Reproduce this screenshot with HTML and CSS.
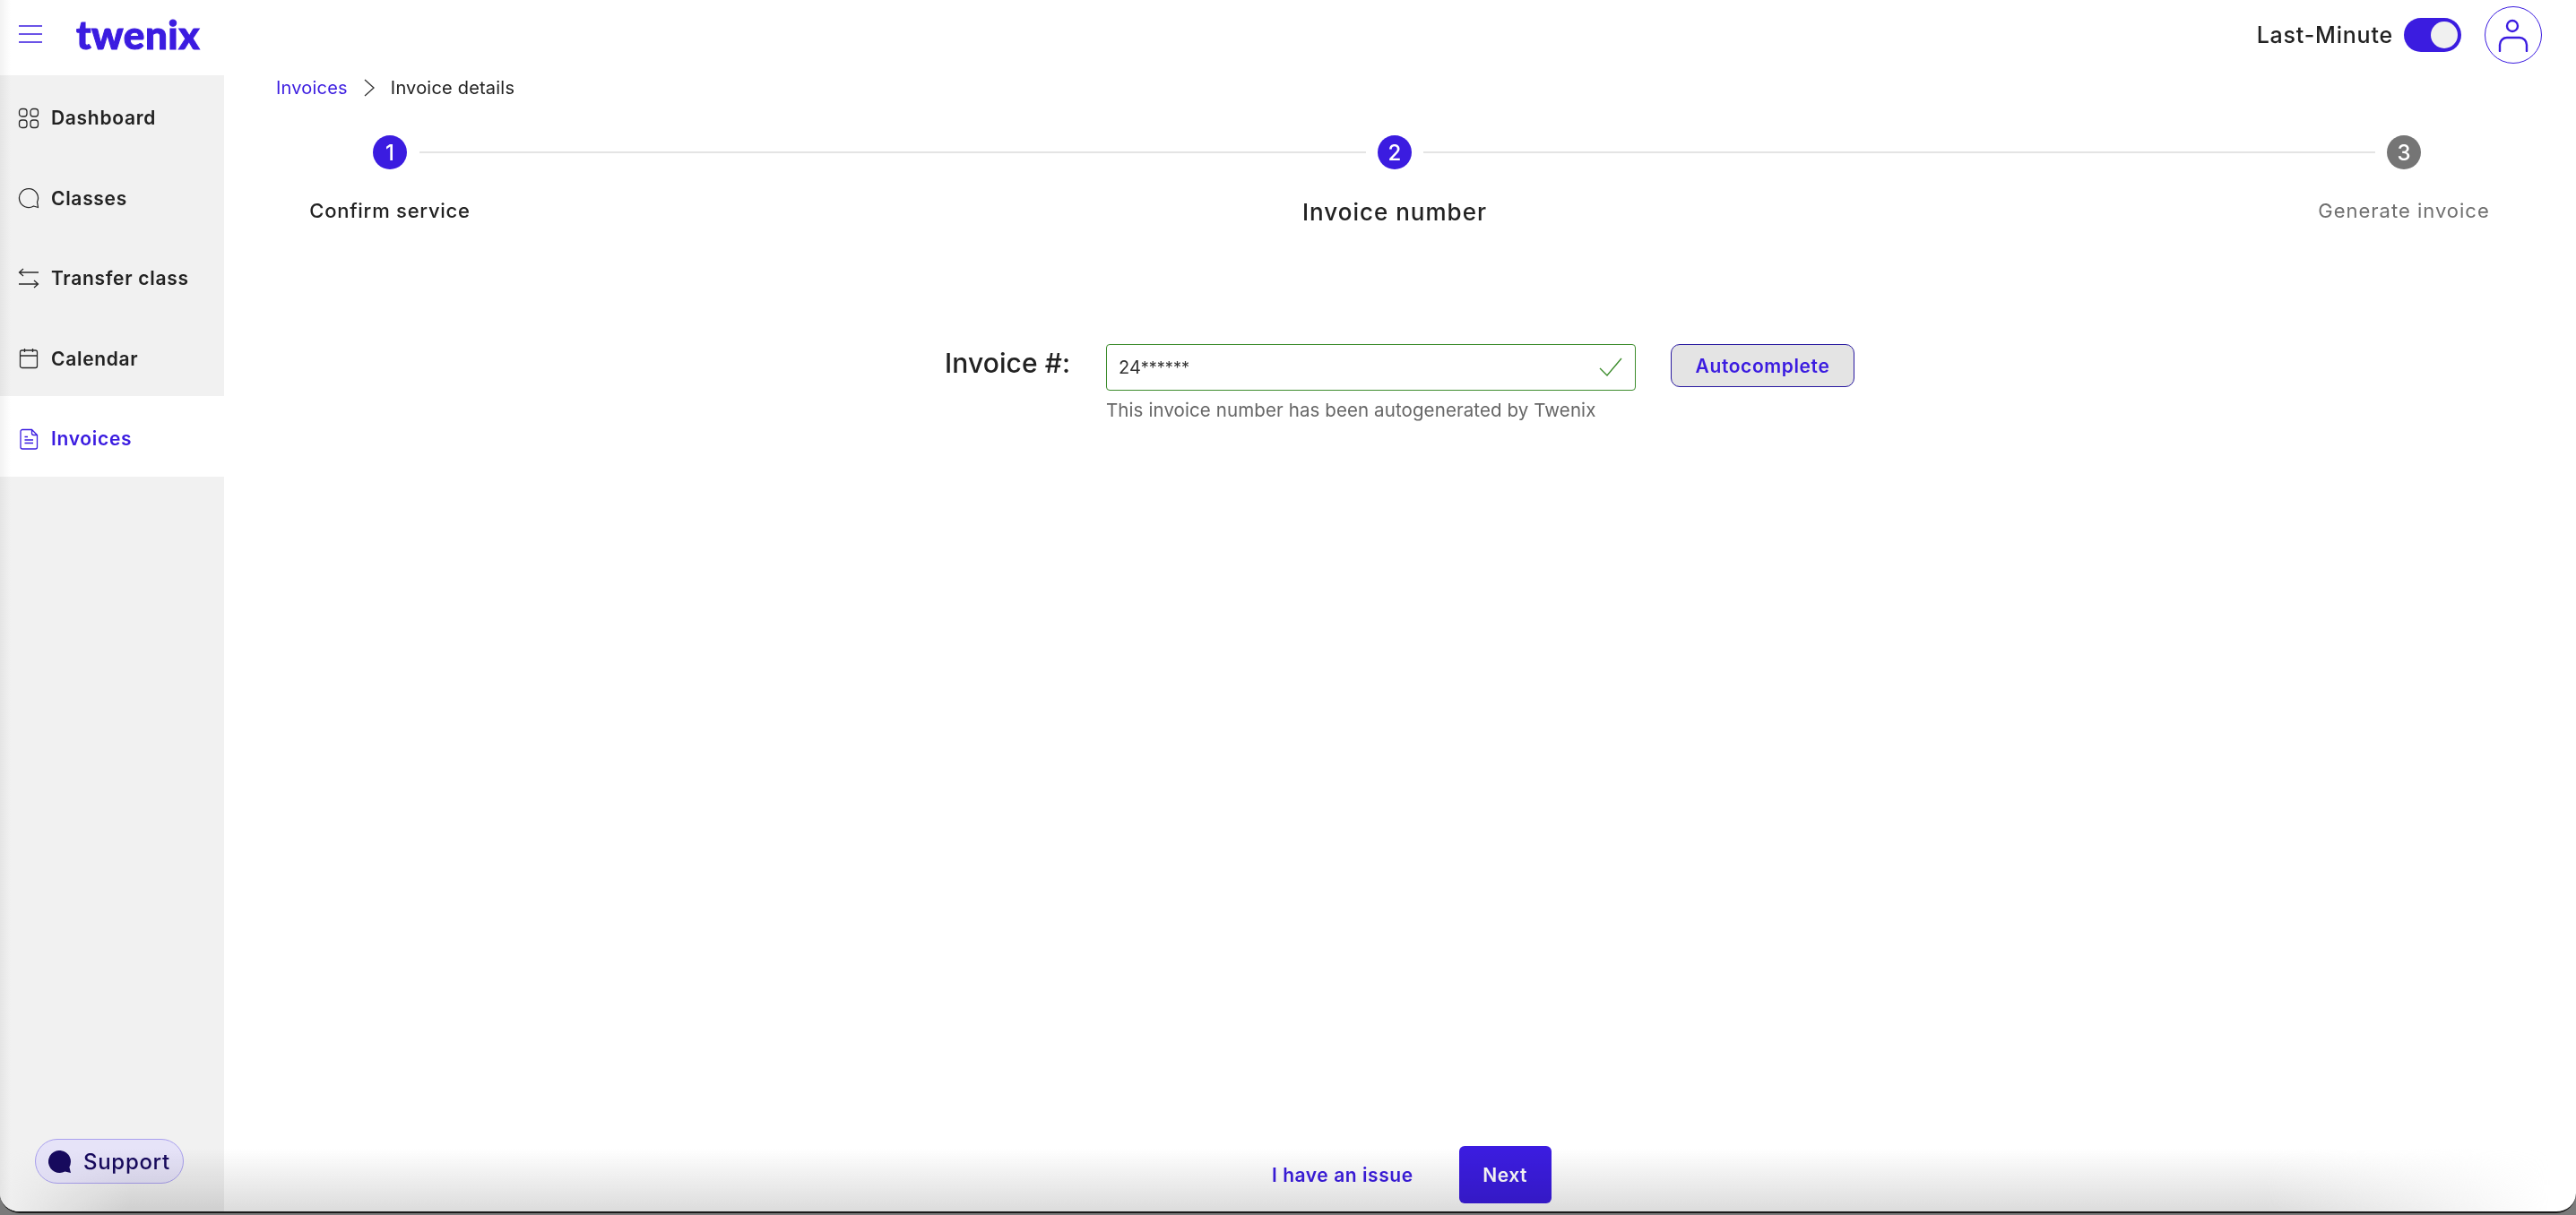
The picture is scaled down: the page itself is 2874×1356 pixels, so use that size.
FILE: index.html
```html
<!DOCTYPE html>
<html lang="en">
<head>
<meta charset="utf-8">
<title>Twenix - Invoice details</title>
<link rel="stylesheet" href="styles.css">
</head>
<body>
<div class="app">
  <header class="topbar">
    <div class="brand">
      <svg class="burger" width="26" height="22" viewBox="0 0 26 22"><path d="M0 2h26M0 11h26M0 20h26" fill="none" stroke="#3b1ce0" stroke-width="1.600"/></svg>
      <span class="logo">twenix</span>
    </div>
    <div class="top-actions">
      <span class="lm-label">Last-Minute</span>
      <span class="toggle"><span class="knob"></span></span>
      <span class="avatar">
        <svg width="34" height="38" viewBox="0 0 34 38"><circle cx="16" cy="9" r="6" fill="none" stroke="#3b1ce0" stroke-width="2.400"/><path d="M2 37V30a8 8 0 0 1 8-8h14a8 8 0 0 1 8 8v7" fill="none" stroke="#3b1ce0" stroke-width="2.400" stroke-linecap="round"/></svg>
      </span>
    </div>
  </header>
  <div class="body">
    <nav class="sidebar">
      <a class="nav-item"><svg class="nav-icon" width="24" height="24" viewBox="0 0 24 24" fill="none" stroke="#2a2a2a" stroke-width="1.300"><rect x="1.500" y="1.500" width="8.500" height="8.500" rx="3"/><rect x="14" y="1.500" width="8.500" height="8.500" rx="3"/><rect x="1.500" y="14" width="8.500" height="8.500" rx="3"/><rect x="14" y="14" width="8.500" height="8.500" rx="3"/></svg>Dashboard</a>
      <a class="nav-item"><svg class="nav-icon" width="24" height="24" viewBox="0 0 24 24" fill="none" stroke="#2a2a2a" stroke-width="1.300"><path d="M22.500 22.500 17.500 21A10.500 10.500 0 1 1 21.500 16.500Z" stroke-linejoin="round"/></svg>Classes</a>
      <a class="nav-item"><svg class="nav-icon" width="24" height="24" viewBox="0 0 24 24" fill="none" stroke="#2a2a2a" stroke-width="1.300"><path d="M23 5H1.500M6 1 1.500 5 6 9M1 18h21.500M18 14l4.500 4-4.500 4"/></svg>Transfer class</a>
      <a class="nav-item"><svg class="nav-icon" width="24" height="24" viewBox="0 0 24 24" fill="none" stroke="#2a2a2a" stroke-width="1.300"><rect x="2.500" y="3" width="19" height="19.500" rx="2"/><path d="M2.500 9h19M7.500 1v4M16.500 1v4"/></svg>Calendar</a>
      <a class="nav-item active"><svg class="nav-icon" width="24" height="24" viewBox="0 0 24 24" fill="none" stroke="#3b1ce0" stroke-width="1.300"><path d="M5 1.500h10.500l6 6V21a2 2 0 0 1-2 2H5a2 2 0 0 1-2-2V3.500a2 2 0 0 1 2-2zM15.500 1.500v4a2 2 0 0 0 2 2h4M7.500 9.500h3.500M7.500 13h9.500M7.500 16.500h9.500"/></svg>Invoices</a>
      <div class="support-wrap">
        <button class="support"><svg width="25" height="25" viewBox="0 0 25 25"><path d="M25 25 18.500 23.400A12.500 12.500 0 1 1 23.400 18.500Z" fill="#170a5e"/></svg>Support</button>
      </div>
    </nav>
    <main class="main">
      <div class="breadcrumb">
        <a class="crumb-link">Invoices</a>
        <svg width="14" height="20" viewBox="0 0 14 20"><path d="M2 1l10 9-10 9" fill="none" stroke="#333" stroke-width="1.300"/></svg>
        <span>Invoice details</span>
      </div>
      <div class="stepper">
        <div class="step">
          <span class="dot">1</span>
          <span class="step-label">Confirm service</span>
        </div>
        <span class="connector"></span>
        <div class="step current">
          <span class="dot">2</span>
          <span class="step-label">Invoice number</span>
        </div>
        <span class="connector"></span>
        <div class="step pending">
          <span class="dot">3</span>
          <span class="step-label">Generate invoice</span>
        </div>
      </div>
      <section class="form-row">
        <label class="field-label">Invoice #:</label>
        <div class="field">
          <div class="input">
            <span>24<span class="stars">******</span></span>
            <svg width="26" height="22" viewBox="0 0 26 22"><path d="M1 12l8 8L25 1" fill="none" stroke="#3c8c2c" stroke-width="1.400"/></svg>
          </div>
          <p class="hint">This invoice number has been autogenerated by Twenix</p>
        </div>
        <button class="autocomplete">Autocomplete</button>
      </section>
      <footer class="actions">
        <a class="issue">I have an issue</a>
        <button class="next">Next</button>
      </footer>
    </main>
  </div>
  <div class="edge-shade"></div>
  <div class="bottom-shade"></div>
</div>
</body>
</html>
```

FILE: styles.css
```css
* { box-sizing: border-box; }
html, body { height: 100%; margin: 0; }
body {
  background: #7a7a7a;
  font-family: "Inter", "Liberation Sans", sans-serif;
  color: #222;
  overflow: hidden;
}
.app {
  position: relative;
  height: 1354px;
  background: #fff;
  border-bottom: 2px solid #1a1a1a;
  border-radius: 0 0 22px 22px;
  overflow: hidden;
  display: flex;
  flex-direction: column;
}
.topbar {
  height: 84px;
  flex: none;
  display: flex;
  justify-content: space-between;
  align-items: flex-start;
  padding: 0 38px 0 21px;
}
.brand { display: flex; align-items: center; gap: 38px; height: 76px; }
.burger { display: block; }
.logo {
  font-family: "Lato", sans-serif;
  font-weight: 900;
  font-size: 44px;
  line-height: 1;
  letter-spacing: 0.5px;
  color: #3b1ce0;
  -webkit-text-stroke: 1px #3b1ce0;
}
.top-actions { display: flex; align-items: center; height: 78px; }
.lm-label { font-size: 25px; font-weight: 500; letter-spacing: .8px; margin-right: 12px; }
.toggle {
  width: 64px; height: 38px;
  border-radius: 19px;
  background: #3b1ce0;
  display: flex; align-items: center; justify-content: flex-end;
  padding-right: 4px;
  margin-right: 26px;
}
.knob { width: 30px; height: 30px; border-radius: 50%; background: #f0f0f0; }
.avatar {
  width: 64px; height: 64px;
  border: 1.500px solid #3b1ce0;
  border-radius: 50%;
  display: flex; align-items: center; justify-content: center;
}
.body { flex: 1; display: flex; min-height: 0; }
.sidebar {
  width: 250px;
  flex: none;
  background: #f1f1f1;
  display: flex;
  flex-direction: column;
}
.nav-item {
  height: 89.500px;
  flex: none;
  display: flex;
  align-items: center;
  padding: 6px 0 0 20px;
  gap: 13px;
  font-size: 21px;
  font-weight: 600;
  letter-spacing: .7px;
  color: #222;
}
.nav-item.active { background: #fff; color: #3b1ce0; }
.nav-icon { flex: none; }
.support-wrap { margin-top: auto; padding: 0 0 31px 39px; }
.support {
  width: 166px; height: 50px;
  display: flex; align-items: center;
  gap: 14px;
  padding: 0 0 0 14px;
  border: 1px solid #a9a0ee;
  border-radius: 25px;
  background: #e6e3f8;
  color: #170a5e;
  font: 500 24px "Inter", sans-serif;
  letter-spacing: .7px;
}
.main { flex: 1; min-width: 0; display: flex; flex-direction: column; padding: 0 56px 0 58px; }
.breadcrumb {
  display: flex; align-items: center; gap: 17px;
  height: 26px; margin-top: 1px;
  font-size: 20px;
  letter-spacing: .2px;
  color: #222;
}
.crumb-link { color: #3b1ce0; }
.stepper {
  display: grid;
  grid-template-columns: 192px 930px 190px 936px 190px;
  align-items: start;
  margin: 40px 0 0 31px;
}
.step {
  display: flex; flex-direction: column; align-items: center;
  gap: 33px;
  font-size: 22px;
  letter-spacing: .75px;
  white-space: nowrap;
  font-weight: 500;
}
.dot {
  width: 38px; height: 38px;
  border-radius: 50%;
  background: #3b1ce0;
  color: #fff;
  display: flex; align-items: center; justify-content: center;
  font-size: 24px;
  font-weight: 500;
  letter-spacing: 0;
}
.connector { height: 2px; background: #e4e4e4; margin: 18px -63px 0; }
.step.current { font-size: 26px; letter-spacing: 1px; gap: 32px; }
.step.pending { color: #6f6f6f; font-weight: 400; letter-spacing: 1px; }
.step.pending .dot { background: #757575; }
.form-row {
  display: flex;
  align-items: flex-start;
  margin: 132px 0 0 746px;
}
.field-label { font-size: 30px; font-weight: 500; width: 180px; line-height: 40px; padding-top: 1px; letter-spacing: .1px; }
.field { width: 591px; }
.input {
  height: 52px;
  border: 1px solid #3c8c2c;
  border-radius: 4px;
  display: flex; align-items: center; justify-content: space-between;
  padding: 0 14px 0 13px;
  font-size: 20px;
  color: #333;
}
.stars { font-size: 18px; }
.hint { margin: 9px 0 0; font-size: 20.500px; letter-spacing: .1px; color: #666; }
.autocomplete {
  width: 205px; height: 48px;
  margin-left: 39px;
  border: 1px solid #2a1aa0;
  border-radius: 10px;
  background: #e4e4e4;
  color: #3b1ce0;
  font: 600 21px "Inter", sans-serif;
  letter-spacing: .6px;
}
.actions {
  margin-top: auto;
  display: flex; align-items: center;
  padding: 0 0 9px 1111px;
  gap: 51px;
}
.issue { color: #3b1ce0; font-size: 21px; font-weight: 600; letter-spacing: .55px; }
.next {
  width: 103px; height: 64px;
  border: 0; border-radius: 6px;
  background: #3b1ce0;
  color: #fff;
  font: 600 21px "Inter", sans-serif;
  letter-spacing: .5px;
}
.edge-shade {
  position: absolute; left: 0; top: 0; bottom: 0; width: 12px;
  background: linear-gradient(to right, rgba(0,0,0,.05), transparent);
  pointer-events: none;
}
.bottom-shade {
  position: absolute; left: 0; right: 0; bottom: 0; height: 70px;
  background: linear-gradient(to top, #dcdcdc, rgba(226,226,226,0));
  -webkit-mask-image: linear-gradient(to right, transparent, #000 5%, #000 88%, transparent 99%);
  mask-image: linear-gradient(to right, transparent, #000 5%, #000 88%, transparent 99%);
  mix-blend-mode: multiply;
  pointer-events: none;
}
```
